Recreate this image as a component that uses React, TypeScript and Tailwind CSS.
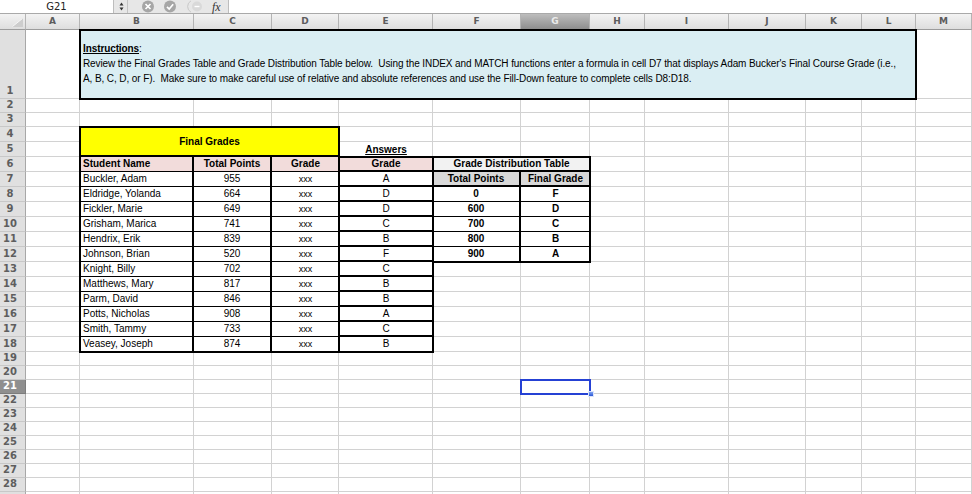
import React from 'react';

// same template for the background sheet and the content layer on top of it
const GRID =
  'grid grid-cols-[26px_54px_114px_78px_67px_94px_88px_69px_55px_84px_77px_56px_54px_56px] grid-rows-[16px_69px_14px_14px_repeat(15,15px)_repeat(11,14px)]';

const LETTERS = ['A', 'B', 'C', 'D', 'E', 'F', 'G', 'H', 'I', 'J', 'K', 'L', 'M'];
const ROWS = Array.from({ length: 29 }, (_, i) => i + 1);

const students = [
  { name: 'Buckler, Adam', points: 955, grade: 'A' },
  { name: 'Eldridge, Yolanda', points: 664, grade: 'D' },
  { name: 'Fickler, Marie', points: 649, grade: 'D' },
  { name: 'Grisham, Marica', points: 741, grade: 'C' },
  { name: 'Hendrix, Erik', points: 839, grade: 'B' },
  { name: 'Johnson, Brian', points: 520, grade: 'F' },
  { name: 'Knight, Billy', points: 702, grade: 'C' },
  { name: 'Matthews, Mary', points: 817, grade: 'B' },
  { name: 'Parm, David', points: 846, grade: 'B' },
  { name: 'Potts, Nicholas', points: 908, grade: 'A' },
  { name: 'Smith, Tammy', points: 733, grade: 'C' },
  { name: 'Veasey, Joseph', points: 874, grade: 'B' },
];

const distribution = [
  { points: 0, grade: 'F' },
  { points: 600, grade: 'D' },
  { points: 700, grade: 'C' },
  { points: 800, grade: 'B' },
  { points: 900, grade: 'A' },
];

const FormulaBar = () => (
  <div className="h-[14px] flex border-b border-[#a9a9a9] bg-white">
    <div className="w-[113px] flex items-center justify-center font-['DejaVu_Sans',sans-serif] text-[10px] leading-none text-[#222]">
      G21
    </div>
    <div className="w-[116px] flex items-center bg-[#e7e7e7] border-x border-[#bdbdbd]">
      <svg width="96" height="13" viewBox="0 0 96 13">
        <path d="M5.5 5.5 L9.5 5.5 L7.5 2.5 Z" fill="#333" />
        <path d="M5.5 7.5 L9.5 7.5 L7.5 10.5 Z" fill="#333" />
        <line x1="13.5" y1="0" x2="13.5" y2="13" stroke="#c4c4c4" />
        <circle cx="34" cy="6.5" r="6" fill="#a6a6a6" />
        <path d="M31.5 4 L36.5 9 M36.5 4 L31.5 9" stroke="#fff" strokeWidth="1.7" />
        <circle cx="56" cy="6.5" r="6" fill="#a6a6a6" />
        <path d="M53 6.8 L55.2 9 L59.2 4.2" stroke="#fff" strokeWidth="1.7" fill="none" />
        <path d="M77 0.8 A6.5 6.5 0 0 0 77 12.2" stroke="#c8c8c8" fill="none" />
        <circle cx="83" cy="6.5" r="5" fill="#d9d9d9" />
        <line x1="80.5" y1="6.5" x2="85.5" y2="6.5" stroke="#fff" strokeWidth="1.4" />
      </svg>
      <span className="pl-[2px] font-['Liberation_Serif',serif] italic text-[12px] leading-none text-[#333]">
        fx
      </span>
    </div>
  </div>
);

const SheetBackground = () => (
  <div className={`${GRID} col-start-1 row-start-1`}>
    <div className="relative bg-linear-to-b from-[#f3f3f3] to-[#dedede] border-r border-b border-r-[#b4b4b4] border-b-[#9c9c9c]">
      <svg className="absolute right-[2px] bottom-[2px]" width="11" height="9" viewBox="0 0 11 9">
        <path d="M0 9 L11 9 L11 0 Z" fill="#cdcdcd" />
        <path d="M0.5 8.5 L10.5 0.5" stroke="#f6f6f6" />
      </svg>
    </div>
    {LETTERS.map((l) => (
      <div
        key={l}
        className={`flex items-center justify-center font-['DejaVu_Sans',sans-serif] text-[9px] font-bold leading-none border-r border-b border-r-[#b4b4b4] border-b-[#9c9c9c] ${
          l === 'G'
            ? 'bg-linear-to-b from-[#bdbdbd] to-[#8e8e8e] text-[#ececec]'
            : 'bg-linear-to-b from-[#f3f3f3] to-[#dedede] text-[#5c5c5c]'
        }`}
      >
        {l}
      </div>
    ))}
    {ROWS.map((n) => (
      <React.Fragment key={n}>
        <div
          className={`flex items-end justify-center pr-[5px] pb-[2px] border-r border-b font-['DejaVu_Sans',sans-serif] text-[10px] font-bold leading-none ${
            n === 21
              ? 'bg-[#8f8f8f] text-white border-r-[#7c7c7c] border-b-[#7c7c7c]'
              : 'bg-[#e0e0e0] text-[#5e5e5e] border-r-[#a8a8a8] border-b-[#c8c8c8]'
          }`}
        >
          {/* row 29 only peeks in at the bottom edge */}
          {n < 29 ? n : null}
        </div>
        {LETTERS.map((l) => (
          <div key={l} className="bg-white border-r border-b border-[#d2d2d2]" />
        ))}
      </React.Fragment>
    ))}
  </div>
);

const SheetContent = () => (
  <div className={`${GRID} col-start-1 row-start-1 text-[10px] text-black`}>
    {/* B1:L1 instructions */}
    <div className="col-start-3 col-span-11 row-start-2 bg-[#daeef3] outline-2 outline-black outline-offset-[-1px] pt-[11px] pl-[3px] leading-[15px] whitespace-pre tracking-[-0.1px]">
      <div>
        <span className="font-bold underline">Instructions</span>:
      </div>
      <div>
        Review the Final Grades Table and Grade Distribution Table below.  Using the INDEX and MATCH functions enter a formula in cell D7 that displays Adam Bucker's Final Course Grade (i.e.,
      </div>
      <div>
        A, B, C, D, or F).  Make sure to make careful use of relative and absolute references and use the Fill-Down feature to complete cells D8:D18.
      </div>
    </div>

    {/* B4:D18 final grades */}
    <div className="col-start-3 col-span-3 row-start-5 row-span-15 flex flex-col bg-white outline-2 outline-black outline-offset-[-1px]">
      <div className="h-[30px] flex items-center justify-center bg-[#ffff00] border-b-2 border-black font-bold">
        Final Grades
      </div>
      <div className="h-[15px] grid grid-cols-[114px_78px_67px] bg-[#f2dcdb] border-b border-black font-bold leading-[14px]">
        <div className="pl-[3px] border-r-2 border-black">Student Name</div>
        <div className="text-center border-r-2 border-black">Total Points</div>
        <div className="text-center">Grade</div>
      </div>
      {students.map((s, idx) => (
        <div
          key={s.name}
          className={`h-[15px] grid grid-cols-[114px_78px_67px] leading-[14px] ${
            idx < students.length - 1 ? 'border-b border-black' : ''
          }`}
        >
          <div className="pl-[3px] border-r-2 border-black">{s.name}</div>
          <div className="text-center border-r-2 border-black">{s.points}</div>
          <div className="text-center text-[9px]">xxx</div>
        </div>
      ))}
    </div>

    {/* E5 / E6:E18 answers */}
    <div className="col-start-6 row-start-6 flex items-end justify-center pb-[1px] font-bold underline leading-[13px]">
      Answers
    </div>
    <div className="col-start-6 row-start-7 row-span-13 flex flex-col bg-white outline-2 outline-black outline-offset-[-1px]">
      <div className="h-[15px] bg-[#f2dcdb] border-b-2 border-black text-center font-bold leading-[13px]">Grade</div>
      {students.map((s, idx) => (
        <div
          key={s.name}
          className={`h-[15px] text-center leading-[13px] ${idx < students.length - 1 ? 'border-b-2 border-black' : ''}`}
        >
          {s.grade}
        </div>
      ))}
    </div>

    {/* F6:G12 grade distribution */}
    <div className="col-start-7 col-span-2 row-start-7 row-span-7 flex flex-col bg-white outline-2 outline-black outline-offset-[-1px] font-bold">
      <div className="h-[15px] bg-[#f2f2f2] border-b-2 border-black text-center leading-[13px]">
        Grade Distribution Table
      </div>
      <div className="h-[15px] grid grid-cols-[88px_69px] bg-[#d9d9d9] border-b-2 border-black leading-[13px]">
        <div className="text-center border-r-2 border-black">Total Points</div>
        <div className="text-center">Final Grade</div>
      </div>
      {distribution.map((d, idx) => (
        <div
          key={d.points}
          className={`h-[15px] grid grid-cols-[88px_69px] leading-[14px] ${
            idx < distribution.length - 1 ? 'border-b border-black' : ''
          }`}
        >
          <div className="text-center border-r-2 border-black">{d.points}</div>
          <div className="text-center">{d.grade}</div>
        </div>
      ))}
    </div>

    {/* G21 selection */}
    <div className="col-start-8 row-start-22 relative outline-2 outline-[#2541d4] outline-offset-[-1px]">
      <div className="absolute right-[-4px] bottom-[-3px] w-[6px] h-[6px] bg-linear-to-b from-[#7fa3f0] to-[#2c55d6] border border-[#dbe4fb]" />
    </div>
  </div>
);

export default function App() {
  return (
    <div className="w-[972px] h-[494px] overflow-hidden bg-white font-['Liberation_Sans',Arial,sans-serif]">
      <FormulaBar />
      <div className="grid">
        <SheetBackground />
        <SheetContent />
      </div>
    </div>
  );
}
